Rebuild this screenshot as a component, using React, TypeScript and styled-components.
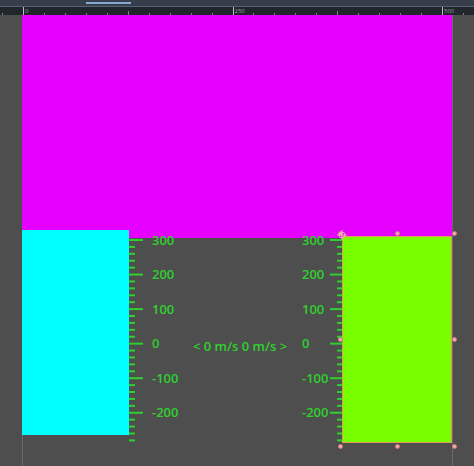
import React from 'react';
import styled, { createGlobalStyle } from 'styled-components';

const GREEN = '#2ed12e';
const STEP = 3.455; // px per 10 units on the speed scales

const GlobalStyle = createGlobalStyle`
  html, body {
    margin: 0;
    padding: 0;
    background: #4e4e4e;
  }
  body {
    font-family: "Open Sans", "Noto Sans", sans-serif;
  }
`;

const Editor = styled.div`
  display: flex;
  flex-direction: column;
  width: 474px;
  height: 466px;
  overflow: hidden;
  background: #4e4e4e;
`;

const TabStrip = styled.div`
  flex: none;
  display: flex;
  align-items: flex-start;
  height: 7px;
  padding: 2px 0 0 86px;
  box-sizing: border-box;
  background: #373e4b;
  border-bottom: 1px solid #596275;
`;

const TabUnderline = styled.div`
  width: 45px;
  height: 2px;
  background: #86a9cf;
`;

const Ruler = styled.svg`
  display: block;
  flex: none;
  background: #21252c;
`;

const Viewport = styled.div`
  flex: 1;
  display: grid;
  grid-template: 1fr / 1fr;
  background: #4e4e4e;
`;

const Layer = styled.div`
  grid-area: 1 / 1;
  display: flex;
  align-items: flex-start;
  padding-left: 22px;
  min-height: 0;
`;

const BoundsFrame = styled.div`
  align-self: stretch;
  width: 429px;
  border-left: 1px solid #6a6a6a;
  border-right: 1px solid #6a6a6a;
`;

const LowerRow = styled(Layer)`
  padding-top: 215px;
`;

const ColorRect = styled.div<{ $w: number; $h: number; $color: string }>`
  flex: none;
  width: ${(p) => p.$w}px;
  height: ${(p) => p.$h}px;
  background: ${(p) => p.$color};
`;

const GreenNode = styled.div`
  position: relative;
  flex: none;
  width: 110px;
  height: 207px;
  margin-top: 6px;
  box-sizing: border-box;
  background: #77ff00;
  border: 1px solid #e29a5c;
`;

const ScaleBox = styled.div<{ $w: number }>`
  flex: none;
  display: flex;
  width: ${(p) => p.$w}px;
  height: 240px;
`;

const LabelColumn = styled.div<{ $pad: number; $w: number }>`
  display: flex;
  flex-direction: column;
  width: ${(p) => p.$w}px;
  margin-top: ${10 - STEP * 5}px;
  padding-left: ${(p) => p.$pad}px;
  box-sizing: border-box;
`;

const ScaleLabel = styled.span`
  height: ${STEP * 10}px;
  line-height: ${STEP * 10}px;
  font-size: 13px;
  font-weight: 600;
  color: ${GREEN};
  white-space: nowrap;
`;

const SpeedText = styled.div`
  flex: none;
  width: 107px;
  margin-top: 107px;
  font-size: 13px;
  font-weight: 600;
  line-height: 18px;
  color: ${GREEN};
  white-space: nowrap;
`;

const Selection = styled.div`
  position: absolute;
  inset: -4px -3px -4px -3px;
  pointer-events: none;
`;

const Handle = styled.div<{ $x: number; $y: number }>`
  position: absolute;
  left: ${(p) => p.$x}%;
  top: ${(p) => p.$y}%;
  width: 5px;
  height: 5px;
  margin: -2.5px 0 0 -2.5px;
  border-radius: 50%;
  box-sizing: border-box;
  background: #f2b0b0;
  border: 1px solid #d27878;
`;

const Pivot = styled.svg`
  position: absolute;
  left: -3px;
  top: -3px;
`;

const TopRuler = () => {
  const scale = 419 / 500;
  const ticks: React.ReactNode[] = [];
  for (let u = -25; u <= 550; u += 25) {
    const x = Math.round(23 + u * scale) + 0.5;
    const big = u % 250 === 0;
    const h = big ? 8 : u % 125 === 0 ? 4 : 2;
    ticks.push(
      <line key={u} x1={x} x2={x} y1={8 - h} y2={8} stroke={big ? '#b8bcc4' : '#7b818b'} strokeWidth={1} />,
    );
  }
  return (
    <Ruler width={474} height={8}>
      {ticks}
      {[0, 250, 500].map((u) => (
        <text key={u} x={25 + u * scale} y={6} fontSize={6} fill="#9aa0a8" fontFamily="Open Sans, sans-serif">
          {u}
        </text>
      ))}
    </Ruler>
  );
};

const ScaleTicks = ({ width, major, minor }: { width: number; major: [number, number]; minor: [number, number] }) => {
  const lines: React.ReactNode[] = [];
  for (let v = 300; v >= -280; v -= 20) {
    const y = 10 + ((300 - v) / 10) * STEP;
    const isMajor = v % 100 === 0;
    const [x1, x2] = isMajor ? major : minor;
    lines.push(<line key={v} x1={x1} x2={x2} y1={y} y2={y} stroke={GREEN} strokeWidth={2} />);
  }
  return (
    <svg width={width} height={240} style={{ flex: 'none' }}>
      {lines}
    </svg>
  );
};

const LABELS = [300, 200, 100, 0, -100, -200];

const Labels = ({ pad, width }: { pad: number; width: number }) => (
  <LabelColumn $pad={pad} $w={width}>
    {LABELS.map((v) => (
      <ScaleLabel key={v}>{v}</ScaleLabel>
    ))}
  </LabelColumn>
);

const handles = [
  [0, 0], [50, 0], [100, 0],
  [0, 50], [100, 50],
  [0, 100], [50, 100], [100, 100],
];

export default function App() {
  return (
    <>
      <GlobalStyle />
      <Editor>
        <TabStrip>
          <TabUnderline />
        </TabStrip>
        <TopRuler />
        <Viewport>
          <Layer>
            <BoundsFrame />
          </Layer>
          <Layer>
            <ColorRect $w={430} $h={223} $color="#e500ff" />
          </Layer>
          <LowerRow>
            <ColorRect $w={107} $h={205} $color="#00ffff" />
            <ScaleBox $w={64}>
              <ScaleTicks width={23} major={[0, 14]} minor={[0, 6]} />
              <Labels pad={0} width={41} />
            </ScaleBox>
            <SpeedText>&lt; 0 m/s 0 m/s &gt;</SpeedText>
            <ScaleBox $w={42}>
              <Labels pad={2} width={30} />
              <ScaleTicks width={12} major={[0, 12]} minor={[7, 12]} />
            </ScaleBox>
            <GreenNode>
              <Selection>
                {handles.map(([hx, hy]) => (
                  <Handle key={`${hx}-${hy}`} $x={hx} $y={hy} />
                ))}
                <Pivot width={10} height={10} viewBox="0 0 10 10">
                  <circle cx={5} cy={5} r={3} fill="none" stroke="#f2b0b0" strokeWidth={1} />
                  <line x1={5} y1={0} x2={5} y2={10} stroke="#f2b0b0" strokeWidth={1} />
                  <line x1={0} y1={5} x2={10} y2={5} stroke="#f2b0b0" strokeWidth={1} />
                </Pivot>
              </Selection>
            </GreenNode>
          </LowerRow>
        </Viewport>
      </Editor>
    </>
  );
}
